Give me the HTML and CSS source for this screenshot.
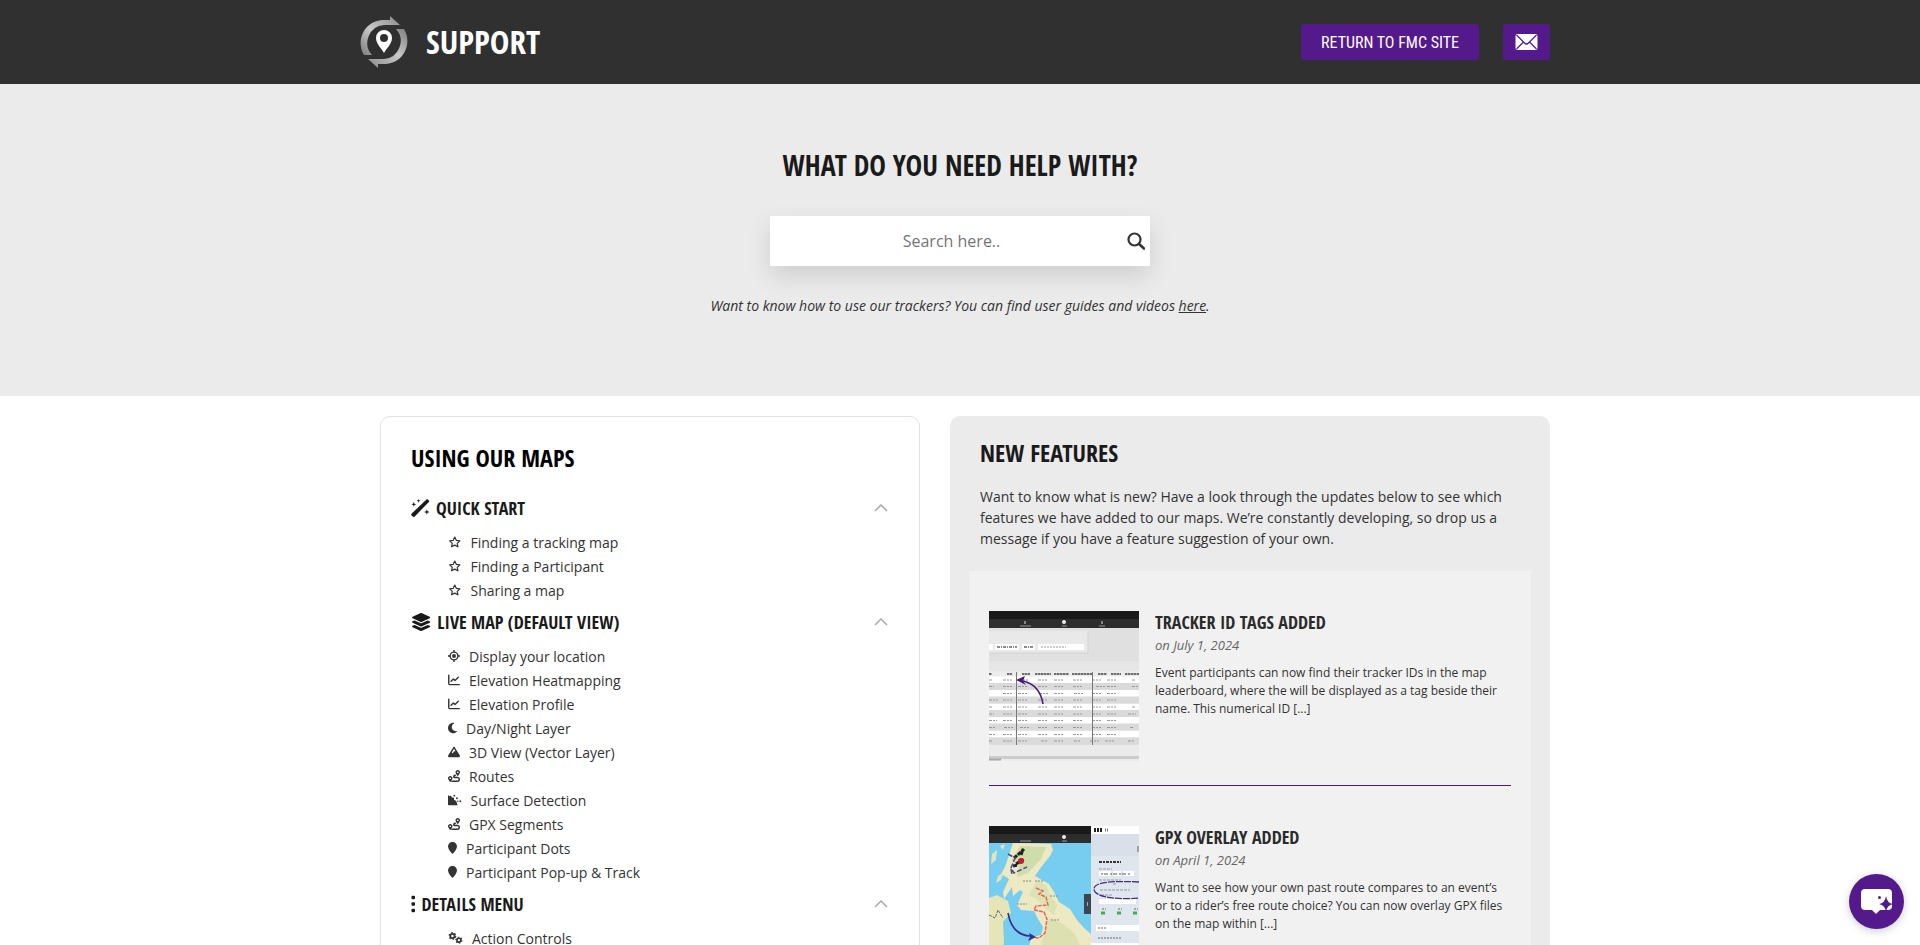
FILE: index.html
```html
<!DOCTYPE html>
<html lang="en">
<head>
<meta charset="utf-8">
<title>Support</title>
<link rel="stylesheet" href="styles.css">
</head>
<body>
<svg class="sprite" aria-hidden="true">
  <symbol id="star" viewBox="0 0 576 512"><path d="M288 48l66 138 152 21-111 105 28 150-135-73-135 73 28-150L70 207l152-21z" fill="none" stroke="currentColor" stroke-width="50" stroke-linejoin="round"/></symbol>
  <symbol id="locate" viewBox="0 0 512 512"><circle cx="256" cy="256" r="165" fill="none" stroke="currentColor" stroke-width="60"/><circle cx="256" cy="256" r="84"/><path d="M228 0h56v90h-56zM228 422h56v90h-56zM0 228h90v56H0zM422 228h90v56h-90z"/></symbol>
  <symbol id="chart" viewBox="0 0 512 512"><path d="M32 50v360q0 44 44 44h404M130 310l100-100 70 66 140-140" fill="none" stroke="currentColor" stroke-width="60" stroke-linecap="round" stroke-linejoin="round"/></symbol>
  <symbol id="moon" viewBox="0 0 384 512"><path d="M223.500 32C100 32 0 132.300 0 256S100 480 223.500 480c60.600 0 115.500-24.200 155.800-63.400c5-4.900 6.300-12.500 3.100-18.700s-10.100-9.700-17-8.500c-9.800 1.700-19.800 2.600-30.100 2.600c-96.900 0-175.500-78.800-175.500-176c0-65.800 36-123.100 89.300-153.300c6.100-3.500 9.200-10.500 7.700-17.300s-7.300-11.900-14.300-12.500c-6.300-.5-12.600-.8-19-.8z"/></symbol>
  <symbol id="mountain" viewBox="0 0 512 512"><path fill-rule="evenodd" d="M256 32c12 0 24 6 31 17l219 358c14 24-3 73-37 73H43c-34 0-51-49-37-73L225 49c7-11 19-17 31-17zm65 192l-65-106-96 157 40 40 56-91z"/></symbol>
  <symbol id="route" viewBox="0 0 512 512"><path fill-rule="evenodd" d="M416 0c53 0 96 43 96 96 0 42-52 113-80 148-9 11-23 11-32 0-28-35-80-106-80-148 0-53 43-96 96-96zm0 60a36 36 0 100 72 36 36 0 000-72z"/><path fill-rule="evenodd" d="M96 256c53 0 96 43 96 96 0 42-52 113-80 148-9 11-23 11-32 0C52 465 0 394 0 352c0-53 43-96 96-96zm0 60a36 36 0 100 72 36 36 0 000-72z"/><path d="M310 224c-80 0-90 96-10 96h120c80 0 80 156 0 156H170" fill="none" stroke="currentColor" stroke-width="64" stroke-linecap="round"/></symbol>
  <symbol id="surface" viewBox="0 0 576 512"><path d="M0 40l60 60 60-40 40 80 90 20 10 80 90 60 60 180H30q-30 0-30-30z"/><circle cx="270" cy="70" r="40"/><circle cx="380" cy="180" r="40"/><circle cx="420" cy="310" r="34"/><circle cx="530" cy="310" r="44"/></symbol>
  <symbol id="pin" viewBox="0 0 384 512"><path d="M192 0c106 0 192 86 192 192 0 84-112 233-166 300-13 16-39 16-52 0C112 425 0 276 0 192 0 86 86 0 192 0z"/></symbol>
  <symbol id="gears" viewBox="0 0 640 512"><g fill="none" stroke="currentColor"><circle cx="190" cy="170" r="92" stroke-width="74"/><circle cx="190" cy="170" r="142" stroke-width="46" stroke-dasharray="74 74"/><circle cx="465" cy="350" r="84" stroke-width="70"/><circle cx="465" cy="350" r="130" stroke-width="44" stroke-dasharray="68 68"/></g></symbol>
  <symbol id="wand" viewBox="0 0 540 512"><path d="M14 420L440 14q20-18 42 2l26 26q20 22 0 44L100 502q-20 18-42 0l-44-40q-14-20 0-42z"/><path d="M80 80l18 52 52 18-52 18-18 52-18-52-52-18 52-18zM215-4l14 42 42 14-42 14-14 42-14-42-42-14 42-14zM450 290l20 60 60 20-60 20-20 60-20-60-60-20 60-20z"/></symbol>
  <symbol id="layers" viewBox="0 0 512 512"><path d="M12.410 148.020l232.940 105.670c6.800 3.090 14.490 3.090 21.290 0l232.940-105.670c16.550-7.510 16.550-32.520 0-40.030L266.650 2.310a25.607 25.607 0 0 0-21.290 0L12.410 107.980c-16.550 7.510-16.550 32.530 0 40.040zm487.180 88.280l-58.090-26.330-161.640 73.270c-7.560 3.430-15.590 5.170-23.860 5.170s-16.290-1.740-23.860-5.170L70.510 209.970l-58.100 26.330c-16.550 7.500-16.550 32.500 0 40l232.940 105.590c6.800 3.080 14.490 3.080 21.290 0L499.590 276.300c16.550-7.500 16.550-32.500 0-40zm0 127.800l-57.870-26.230-161.860 73.370c-7.560 3.430-15.590 5.170-23.860 5.170s-16.290-1.740-23.860-5.170L70.290 337.870 12.410 364.100c-16.550 7.500-16.550 32.500 0 40l232.940 105.590c6.800 3.080 14.490 3.080 21.290 0L499.590 404.100c16.550-7.500 16.550-32.500 0-40z"/></symbol>
  <symbol id="dots" viewBox="0 0 128 512"><rect x="14" y="20" width="100" height="100" rx="30"/><rect x="14" y="206" width="100" height="100" rx="30"/><rect x="14" y="392" width="100" height="100" rx="30"/></symbol>
  <symbol id="chevron" viewBox="0 0 14 8"><path d="M1 7l6-6 6 6" fill="none" stroke="currentColor" stroke-width="1.500"/></symbol>
</svg>

<div class="page">
  <header class="topbar">
    <div class="wrap topbar-row">
      <a class="brand" href="#">
        <svg class="brand-mark" viewBox="0 0 50 52" aria-hidden="true">
          <defs><linearGradient id="ring" x1="0" y1="1" x2="1" y2="0"><stop offset="0" stop-color="#7c7c7c"/><stop offset=".45" stop-color="#c8c8c8"/><stop offset="1" stop-color="#8a8a8a"/></linearGradient></defs>
          <path id="sweep" d="M4 39A23 23 0 0 1 22 4h8V0l10 9H24A18 18 0 0 0 12 39z" fill="url(#ring)"/>
          <path d="M4 39A23 23 0 0 1 22 4h8V0l10 9H24A18 18 0 0 0 12 39z" fill="url(#ring)" transform="rotate(180 24 26)"/>
          <path fill-rule="evenodd" d="M24 14a8 8 0 0 1 8 8c0 6-6 11-8 15-2-4-8-9-8-15a8 8 0 0 1 8-8zm0 4a4 4 0 1 0 0 8 4 4 0 0 0 0-8z" fill="#fff"/>
        </svg>
        <span class="brand-name">SUPPORT</span>
      </a>
      <nav class="actions">
        <a class="btn" href="#">RETURN TO FMC SITE</a>
        <a class="btn btn-mail" href="#" aria-label="Email us">
          <svg class="mail" viewBox="0 0 22 16" aria-hidden="true"><rect width="22" height="16" rx="2" fill="#fff"/><path d="M1 1l8 8q2 2 4 0l8-8M1 15l7-7M21 15l-7-7" fill="none" stroke="#54198b" stroke-width="1.200"/></svg>
        </a>
      </nav>
    </div>
  </header>

  <section class="hero">
    <h1 class="hero-title">WHAT DO YOU NEED HELP WITH?</h1>
    <form class="search">
      <input class="search-input" type="text" placeholder="Search here.." aria-label="Search">
      <button class="search-btn" type="button" aria-label="Submit search">
        <svg class="search-icon" viewBox="0 0 18 18" aria-hidden="true"><circle cx="7.500" cy="7.500" r="6" fill="none" stroke="#333" stroke-width="2.200"/><path d="M12 12l5 4.500" stroke="#333" stroke-width="2.600" stroke-linecap="round"/></svg>
      </button>
    </form>
    <p class="hero-note">Want to know how to use our trackers? You can find user guides and videos <a class="note-link" href="#">here</a>.</p>
  </section>

  <main class="wrap columns">
    <section class="card guide">
      <h2 class="guide-title">USING OUR MAPS</h2>

      <button class="group" type="button"><svg class="group-icon" viewBox="0 0 540 512"><use href="#wand"/></svg><span class="group-name">QUICK START</span><svg class="chevron"><use href="#chevron"/></svg></button>
      <ul class="links">
        <li><a class="link" href="#"><svg class="ico" viewBox="0 0 576 512"><use href="#star"/></svg>Finding a tracking map</a></li>
        <li><a class="link" href="#"><svg class="ico" viewBox="0 0 576 512"><use href="#star"/></svg>Finding a Participant</a></li>
        <li><a class="link" href="#"><svg class="ico" viewBox="0 0 576 512"><use href="#star"/></svg>Sharing a map</a></li>
      </ul>

      <button class="group" type="button"><svg class="group-icon" viewBox="0 0 576 512"><use href="#layers"/></svg><span class="group-name">LIVE MAP (DEFAULT VIEW)</span><svg class="chevron"><use href="#chevron"/></svg></button>
      <ul class="links">
        <li><a class="link" href="#"><svg class="ico" viewBox="0 0 512 512"><use href="#locate"/></svg>Display your location</a></li>
        <li><a class="link" href="#"><svg class="ico" viewBox="0 0 512 512"><use href="#chart"/></svg>Elevation Heatmapping</a></li>
        <li><a class="link" href="#"><svg class="ico" viewBox="0 0 512 512"><use href="#chart"/></svg>Elevation Profile</a></li>
        <li><a class="link" href="#"><svg class="ico" viewBox="0 0 384 512"><use href="#moon"/></svg>Day/Night Layer</a></li>
        <li><a class="link" href="#"><svg class="ico" viewBox="0 0 512 512"><use href="#mountain"/></svg>3D View (Vector Layer)</a></li>
        <li><a class="link" href="#"><svg class="ico" viewBox="0 0 512 512"><use href="#route"/></svg>Routes</a></li>
        <li><a class="link" href="#"><svg class="ico" viewBox="0 0 576 512"><use href="#surface"/></svg>Surface Detection</a></li>
        <li><a class="link" href="#"><svg class="ico" viewBox="0 0 512 512"><use href="#route"/></svg>GPX Segments</a></li>
        <li><a class="link" href="#"><svg class="ico" viewBox="0 0 384 512"><use href="#pin"/></svg>Participant Dots</a></li>
        <li><a class="link" href="#"><svg class="ico" viewBox="0 0 384 512"><use href="#pin"/></svg>Participant Pop-up &amp; Track</a></li>
      </ul>

      <button class="group" type="button"><svg class="group-icon" viewBox="0 0 128 512"><use href="#dots"/></svg><span class="group-name">DETAILS MENU</span><svg class="chevron"><use href="#chevron"/></svg></button>
      <ul class="links">
        <li><a class="link" href="#"><svg class="ico" viewBox="0 0 640 512"><use href="#gears"/></svg>Action Controls</a></li>
      </ul>
    </section>

    <section class="card news">
      <h2 class="news-title">NEW FEATURES</h2>
      <p class="news-intro">Want to know what is new? Have a look through the updates below to see which features we have added to our maps. We’re constantly developing, so drop us a message if you have a feature suggestion of your own.</p>
      <div class="feed">
        <article class="post">
          <svg class="thumb" viewBox="0 0 150 150" role="img" aria-label="Leaderboard with tracker ID tags">
            <rect width="150" height="150" fill="#e0e0e0"/>
            <rect width="150" height="9" fill="#191919"/><rect y="8" width="150" height="9" fill="#2d2d2d"/>
            <path d="M31 15h11M73 15h5M110 15h6" stroke="#999"/><circle cx="75" cy="11" r="2" fill="#eee"/><path d="M36 10v3M113 10v3" stroke="#ddd"/>
            <path d="M0 20h99v22H0z" fill="#e9e9e9"/><path d="M0 42h99V20" fill="none" stroke="#d2d2d2"/>
            <path d="M0 33h4v6H0zM6 33h24v6H6zM33 33h13v6H33zM49 33h46v6H49z" fill="#fff"/>
            <path d="M8 36h20M35 36h9" stroke="#666" stroke-width="1.300" stroke-dasharray="3 1 1 1"/><path d="M52 36h25" stroke="#999" stroke-dasharray="2 1"/>
            <rect y="50" width="150" height="10" fill="#e6e6e6"/><rect y="60" width="150" height="6" fill="#ececec"/>
            <path d="M0 69h150M0 82.500h150M0 96h150M0 109.500h150M0 123h150" stroke="#fff" stroke-width="7"/>
            <path d="M0 75.500h150M0 89h150M0 102.500h150M0 116h150M0 130h150" stroke="#dadada" stroke-width="7"/>
            <rect y="134" width="150" height="16" fill="#ebebeb"/>
            <path d="M0 63h3m15 0h5m10 0h8m5 0h16m3 0h15m3 0h21m5 0h9m4 0h10m4 0h16" stroke="#444" stroke-width="1.600" stroke-dasharray="2 .5 3 .5"/>
            <g stroke="#999" stroke-dasharray="3 1 2 1 2 5 4 1 3 1 3 3"><path d="M0 69h3m11 0h12m4 0h13m6 0h10m6 0h12m7 0h13m6 0h12m3 0h11m14 0h3"/><path d="M0 75.500h5m9 0h12m3 0h14m6 0h11m5 0h12m7 0h13m10 0h9m2 0h11m14 0h8M14 82.500h11m4 0h14m7 0h9m6 0h10m10 0h11m7 0h12m3 0h11M0 89h11m3 0h12m3 0h14m6 0h11m5 0h12m7 0h13m6 0h12m3 0h11M0 96h3m11 0h12m3 0h14m6 0h11m5 0h12m7 0h13m6 0h12m3 0h11m14 0h3M0 103h5m9 0h12m3 0h14m6 0h11m5 0h12m7 0h13m6 0h12m3 0h11m10 0h8M0 109.500h8m6 0h12m3 0h14m6 0h11m5 0h12m7 0h13m6 0h12m3 0h11M0 116.500h6m9 0h9m7 0h12m6 0h13m3 0h12m7 0h13m6 0h12m3 0h11m12 0h3M0 123.500h7m7 0h12m3 0h14m6 0h11m5 0h12m7 0h13m6 0h12m3 0h11M0 130h3m11 0h12m3 0h14m9 0h6m7 0h10m10 0h6m10 0h12m3 0h11m12 0h6"/></g>
            <path d="M27.500 61v73M103.500 61v73" stroke="#777"/>
            <path d="M0 146.500h150" stroke="#ccc" stroke-width="3"/><path d="M0 148.500h12" stroke="#aaa" stroke-width="2"/>
            <path d="M54 93q-3-19-20-23" fill="none" stroke="#451a78" stroke-width="1.600"/><path d="M27 69l9-4-2 5 3 4z" fill="#451a78"/>
          </svg>
          <div class="post-body">
            <h3 class="post-title">TRACKER ID TAGS ADDED</h3>
            <p class="post-date">on July 1, 2024</p>
            <p class="post-text">Event participants can now find their tracker IDs in the map leaderboard, where the will be displayed as a tag beside their name. This numerical ID [...]</p>
          </div>
        </article>
        <article class="post">
          <svg class="thumb" viewBox="0 0 150 150" role="img" aria-label="Map with a GPX overlay">
            <rect width="150" height="150" fill="#76cdf0"/>
            <path d="M24 17l38 1 2 6-3 6-8 10-7 10 7 4 7 4 5 8 5 10 11 7 7 11 7 8 7 6v42H36l4-30 3-9 9-2 2-8-5-8-4-8-13-1-4-5 6-13-3-2-7 6-1-9-8 12-1-7 6-13-8-5 4-7z" fill="#ece9c3"/>
            <path d="M31 20l26 1-5 12-13 14-11 4 2-12-8-4z" fill="#cfdcab"/><path d="M48 54l9 5 5 12 6 8-3 10-8-6-9-10-8-4z" fill="#dbe2b4"/><path d="M60 92l14 6 12 10 6 14-12 20H58l-6-24z" fill="#dde0b0"/>
            <path d="M0 72l8-3 11 6 3 12-8 9 1 20-5 34H0z" fill="#e5e5b8"/><path d="M0 89l6 3 3-8 5 8" fill="none" stroke="#667" stroke-dasharray="3 1"/>
            <path d="M3 28l5-4-1 10-5 4zM11 20l5-2-2 6zM9 50l6-4-3 8-5 3z" fill="#dfe6be"/>
            <path d="M25 32l6-5 4-4M27 38l8-5M32 29l2-6M24 40l5-1" stroke="#222" stroke-width="3" stroke-dasharray="4 1"/><circle cx="32" cy="35" r="3" fill="#c41c2a"/><path d="M19 28l7 4-4 10 3 5 13-6M22 43l1 6" fill="none" stroke="#47489c" stroke-width="1.500" stroke-dasharray="5 2"/>
            <path d="M47 62l7 3-4 3 7 3 2 8-12 1-2 4 10 2 3 7-2 14-6 5-9-1" fill="none" stroke="#e0685c" stroke-width="1.500" stroke-dasharray="4 1"/>
            <path d="M34 55h8m4 0h8M61 70h8M28 78h10M62 94h8" stroke="#888" stroke-dasharray="2 1"/>
            <path d="M19 87q4 22 22 23" fill="none" stroke="#392c92" stroke-width="1.600"/><path d="M47 111l-7-4 1 4-2 4z" fill="#392c92"/>
            <rect width="102" height="9" fill="#191919"/><rect y="8" width="102" height="9" fill="#2d2d2d"/><path d="M31 15h11M73 15h5" stroke="#999"/><circle cx="75" cy="11" r="2" fill="#eee"/>
            <rect x="95" y="68" width="7" height="20" fill="#3c4650"/><path d="M98.500 76v4" stroke="#aaa"/>
            <rect x="102" width="48" height="150" fill="#e0e6ee"/><rect x="102" width="48" height="8" fill="#fff"/><path d="M105 4h8" stroke="#222" stroke-width="4" stroke-dasharray="2 1"/><path d="M116 4h3" stroke="#777" stroke-width="3" stroke-dasharray="1 1"/>
            <rect x="102" y="8" width="48" height="22" fill="#d9e0ea"/><path d="M149 20v6" stroke="#666"/>
            <path d="M110 36h22" stroke="#333" stroke-width="2" stroke-dasharray="3 1 2 1"/><path d="M110 43h13M110 54h22M124 58h4M111 64h30M112 69h12" stroke="#99a" stroke-dasharray="3 1"/>
            <path d="M110 45h12v5h-12zM124 45h8v5h-8zM134 45h11v5h-11zM110 73h37v5h-37zM107 99h43v6h-43zM102 117h48v2h-48z" fill="#fff"/><path d="M112 48h30" stroke="#555" stroke-dasharray="2 1 4 2"/>
            <path d="M150 56c-21-1-45-1-45 7 0 9 28 11 45 9" fill="none" stroke="#403080" stroke-width="1.300" stroke-dasharray="7 1"/>
            <path d="M112 87h4M128 87h4M144 87h4" stroke="#3dae4a" stroke-width="3"/><path d="M113 83h4M129 83h4M145 83h4M109 102h8M109 112h24" stroke="#666" stroke-dasharray="2 1"/>
          </svg>
          <div class="post-body">
            <h3 class="post-title">GPX OVERLAY ADDED</h3>
            <p class="post-date">on April 1, 2024</p>
            <p class="post-text">Want to see how your own past route compares to an event’s or to a rider’s free route choice? You can now overlay GPX files on the map within [...]</p>
          </div>
        </article>
      </div>
    </section>
  </main>
</div>

<button class="chat" type="button" aria-label="Open chat">
  <svg class="chat-icon" viewBox="0 0 34 28" aria-hidden="true"><path d="M5 1h23q4 0 4 4v13q0 4-4 4h-8l-4 4-4-4H5q-4 0-4-4V5q0-4 4-4z" fill="#fff"/><path d="M26 8q1 7 7 8-6 1-7 8-1-7-7-8 6-1 7-8z" fill="#54198b"/><circle cx="19.500" cy="9.500" r="1.500" fill="#54198b"/></svg>
</button>
</body>
</html>
```
FILE: styles.css
```css
* { box-sizing: border-box; }

body {
  margin: 0;
  background: #fff;
  color: #333;
  font-family: "Open Sans", "Noto Sans", sans-serif;
  font-size: 14px;
}

h1, h2, h3, p, ul { margin: 0; padding: 0; }
a { color: inherit; text-decoration: none; }
svg { fill: currentColor; }

.sprite { display: none; }

.page { height: 100vh; overflow: hidden; }

.wrap {
  max-width: 1200px;
  margin: 0 auto;
  padding-right: 10px;
}

.brand-name, .hero-title, .guide-title, .news-title, .group, .post-title {
  font-family: "Open Sans Condensed", "Noto Sans Condensed", "Roboto Condensed", "Liberation Sans Narrow", "DejaVu Sans Condensed", sans-serif;
  font-weight: 700;
}

/* Top bar */
.topbar { background: #303030; }
.topbar-row {
  display: flex;
  align-items: center;
  justify-content: space-between;
  height: 84px;
}
.brand { display: flex; align-items: center; gap: 16px; color: #fff; }
.brand-mark { width: 50px; height: 52px; }
.brand-name { font-size: 33px; line-height: 48px; }
.actions { display: flex; gap: 24px; }
.btn {
  display: flex;
  align-items: center;
  height: 36px;
  padding: 0 20px;
  border-radius: 3px;
  background: #54198b;
  color: #fff;
  font-family: "Roboto Condensed", "Liberation Sans Narrow", Roboto, sans-serif;
  font-size: 16px;
}
.btn-mail { padding: 0 12px; }
.mail { width: 23px; height: 16px; }

/* Search area */
.hero {
  display: flex;
  flex-direction: column;
  align-items: center;
  padding: 60px 20px 80px;
  background: #ebebeb;
}
.hero-title { color: #1a1a1a; font-size: 28px; line-height: 42px; }
.search {
  display: flex;
  width: 380px;
  height: 50px;
  margin-top: 30px;
  background: #fff;
  box-shadow: 0 10px 24px rgba(0, 0, 0, .12);
}
.search-input {
  flex: 1;
  min-width: 0;
  padding: 0 0 0 16px;
  border: 0;
  background: none;
  font: 16px "Open Sans", sans-serif;
  text-align: center;
}
.search-input::placeholder { color: #757575; }
.search-btn { padding: 0 5px 0 10px; border: 0; background: none; }
.search-icon { display: block; width: 18px; height: 18px; }
.hero-note { margin-top: 29px; font-size: 14px; font-style: italic; line-height: 21px; }
.note-link { text-decoration: underline; }

/* Columns */
.columns {
  display: grid;
  grid-template-columns: 9fr 10fr;
  gap: 30px;
  padding-left: 20px;
  padding-top: 20px;
}
.card { border-radius: 10px; }
.guide { padding: 23px 31px 24px 30px; border: 1px solid #e2e2e2; }
.guide-title { margin-bottom: 16px; color: #000; font-size: 24px; line-height: 36px; }
.group {
  display: flex;
  align-items: center;
  width: 100%;
  height: 32px;
  padding: 0;
  border: 0;
  background: none;
  color: #1a1a1a;
  font-size: 18px;
  text-align: left;
}
.group-icon { height: 18px; margin-right: 6px; }
.group-name { flex: 1; }
.chevron { width: 14px; height: 8px; color: #aaa; }
.links { padding: 6px 0 4px 37px; list-style: none; }
.link { display: flex; align-items: center; gap: 9px; height: 24px; }
.ico { height: 12px; }

.news { padding: 20px 19px; background: #ebebeb; }
.news-title { padding: 0 11px; color: #1a1a1a; font-size: 24px; line-height: 34px; }
.news-intro { padding: 16px 11px 22px; line-height: 21px; }
.feed { padding: 0 20px; background: #f1f1f1; }
.post {
  display: flex;
  gap: 16px;
  padding: 40px 0 24px;
  border-bottom: 1px solid #4b1a80;
}
.thumb { flex: none; width: 150px; height: 150px; }
.post-title { color: #2b2b2b; font-size: 18px; line-height: 22px; }
.post-date { margin: 2px 0 9px; color: #666; font-size: 13px; font-style: italic; line-height: 20px; }
.post-text { font-size: 12px; line-height: 18px; }

/* Floating chat button */
.chat {
  position: fixed;
  right: 16px;
  bottom: 16px;
  display: flex;
  align-items: center;
  justify-content: center;
  width: 55px;
  height: 55px;
  padding: 0;
  border: 0;
  border-radius: 50%;
  background: #54198b;
  box-shadow: 0 2px 8px rgba(0, 0, 0, .2);
}
.chat-icon { width: 34px; height: 28px; }
```
